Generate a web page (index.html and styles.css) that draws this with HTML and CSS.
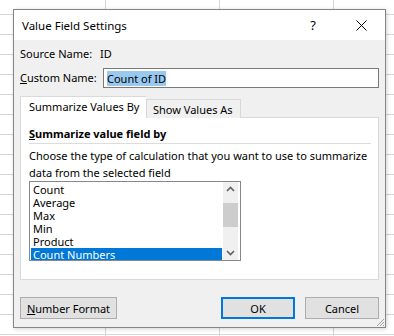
FILE: index.html
```html
<!DOCTYPE html>
<html lang="en">
<head>
    <meta charset="UTF-8">
    <title>Value Field Settings</title>
    <link rel="stylesheet" href="styles.css">
</head>
<body>
    <div class="dialog">
        <div class="titlebar">
            <span class="title">Value Field Settings</span>
            <span class="help">?</span>
            <svg class="close" width="11" height="11" viewBox="0 0 11 11">
                <path d="M0.5 0.5 L10.5 10.5 M10.5 0.5 L0.5 10.5" stroke="#000" stroke-width="1" fill="none"/>
            </svg>
        </div>
        <div class="content">
            <div class="fields">
                <span class="label">Source Name:</span>
                <span class="source">ID</span>
                <span class="label"><u>C</u>ustom Name:</span>
                <div class="input"><span class="selected-text">Count of ID</span></div>
            </div>
            <div class="tabs">
                <div class="tab active">Summarize Values By</div>
                <div class="tab">Show Values As</div>
            </div>
            <div class="panel">
                <div class="group-title"><u>S</u>ummarize value field by</div>
                <p class="hint">Choose the type of calculation that you want to use to summarize data from the selected field</p>
                <div class="listbox">
                    <ul class="items">
                        <li>Count</li>
                        <li>Average</li>
                        <li>Max</li>
                        <li>Min</li>
                        <li>Product</li>
                        <li class="current">Count Numbers</li>
                    </ul>
                    <div class="scrollbar">
                        <svg width="15" height="14" viewBox="0 0 15 14"><path d="M4 9 L7.5 5.5 L11 9" stroke="#606060" stroke-width="1.6" fill="none"/></svg>
                        <div class="thumb"></div>
                        <div class="track"></div>
                        <svg width="15" height="14" viewBox="0 0 15 14"><path d="M4 5 L7.5 8.5 L11 5" stroke="#606060" stroke-width="1.6" fill="none"/></svg>
                    </div>
                </div>
            </div>
            <div class="buttons">
                <button class="btn wide"><u>N</u>umber Format</button>
                <span class="spacer"></span>
                <button class="btn default">OK</button>
                <button class="btn">Cancel</button>
            </div>
        </div>
        <svg class="grip" width="10" height="10" viewBox="0 0 10 10">
            <path d="M9 2 L2 9 M9 5 L5 9 M9 8 L8 9" stroke="#a0a0a0" stroke-width="1" fill="none"/>
        </svg>
    </div>
</body>
</html>
```

FILE: styles.css
```css
* {
    box-sizing: border-box;
}
body {
    margin: 0;
    height: 336px;
    overflow: hidden;
    font-family: 'Noto Sans', 'Open Sans', sans-serif;
    font-size: 11px;
    color: #000;
    background-color: #fff;
    background-image:
        linear-gradient(to right, #d6d6d6 1px, transparent 1px),
        linear-gradient(to bottom, #d6d6d6 1px, transparent 1px);
    background-size: 114px 100%, 100% 20px;
    background-position: 105px 0, 0 14px;
}
.dialog {
    position: relative;
    margin: 9px 0 0 13px;
    width: 373px;
    height: 319px;
    border: 1px solid #858585;
    background: #f0f0f0;
    box-shadow: 1px 1px 4px rgba(0, 0, 0, 0.18);
    display: flex;
    flex-direction: column;
}
.titlebar {
    height: 30px;
    flex: none;
    background: #fff;
    display: flex;
    align-items: center;
    padding-left: 8px;
    font-size: 11.5px;
}
.title {
    flex: 1;
}
.help {
    font-size: 13px;
    margin-right: 40px;
}
.close {
    margin-right: 18px;
}
.content {
    flex: 1;
    padding: 6px 6px 0 6px;
    display: flex;
    flex-direction: column;
}
.fields {
    display: grid;
    grid-template-columns: 80px 1fr;
    row-gap: 6px;
    align-items: center;
    white-space: nowrap;
}
.label, .source {
    line-height: 16px;
}
.input {
    margin-left: 3px;
    height: 20px;
    border: 1px solid #7a7a7a;
    background: #fff;
    display: flex;
    align-items: center;
    padding-left: 3px;
}
.selected-text {
    background: #99c9ef;
    line-height: 15px;
}
.tabs {
    display: flex;
    align-items: flex-end;
    margin-top: 8px;
    height: 22px;
    margin-bottom: -1px;
    position: relative;
    z-index: 1;
    white-space: nowrap;
}
.tab {
    height: 19px;
    line-height: 19px;
    padding: 0 7px 0 6px;
    border: 1px solid #d9d9d9;
    border-bottom: none;
    background: #f0f0f0;
}
.tab.active {
    width: 126px;
    height: 22px;
    line-height: 19px;
    padding: 0 8px;
    background: #fff;
    border-right: none;
}
.panel {
    height: 163px;
    border: 1px solid #d9d9d9;
    background: #fff;
    padding: 8px 4px 0 8px;
}
.group-title {
    font-weight: bold;
    line-height: 16px;
    padding-bottom: 1px;
    border-bottom: 1px solid #dcdcdc;
    margin-right: 3px;
}
.hint {
    margin: 3px 0 0;
    line-height: 17px;
}
.listbox {
    width: 212px;
    height: 80px;
    border: 1px solid #828790;
    display: flex;
    padding-right: 2px;
    overflow: hidden;
}
.items {
    list-style: none;
    margin: 0;
    padding: 1px 0 0 1px;
    flex: 1;
}
.items li {
    height: 13px;
    line-height: 13px;
    padding-left: 2px;
}
.items li.current {
    background: #0078d7;
    color: #fff;
}
.scrollbar {
    width: 15px;
    margin-left: 1px;
    background: #f0f0f0;
    display: flex;
    flex-direction: column;
}
.scrollbar svg {
    display: block;
    flex: none;
}
.thumb {
    height: 24px;
    margin: 7px 0 0;
    background: #cdcdcd;
}
.track {
    flex: 1;
}
.buttons {
    display: flex;
    margin-top: 17px;
    gap: 10px;
}
.spacer {
    flex: 1;
}
.btn {
    font: inherit;
    width: 74px;
    height: 22px;
    padding: 0;
    border: 1px solid #adadad;
    background: #e1e1e1;
    color: #000;
}
.btn.wide {
    width: 97px;
}
.btn.default {
    border: 2px solid #0078d7;
}
.grip {
    position: absolute;
    right: 0;
    bottom: 0;
}
```
